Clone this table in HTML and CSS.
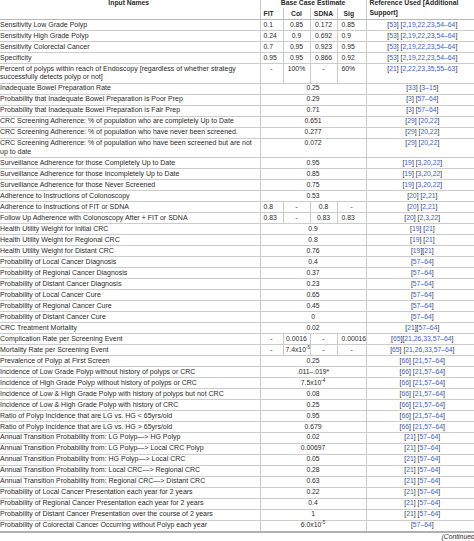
FILE: index.html
```html
<!DOCTYPE html>
<html>
<head>
<meta charset="utf-8">
<link rel="stylesheet" href="styles.css">
</head>
<body>
<div class="page">
<table class="tbl">
<colgroup>
<col class="w-name"><col class="w-fit"><col class="w-col"><col class="w-sdna"><col class="w-sig"><col class="w-ref">
</colgroup>
<thead>
<tr>
<th class="h-name" rowspan="2">Input Names</th>
<th class="h-base" colspan="4">Base Case Estimate</th>
<th class="h-ref" rowspan="2">Reference Used [Additional Support]</th>
</tr>
<tr class="h-sub">
<th class="fit">FIT</th><th>Col</th><th>SDNA</th><th class="sig">Sig</th>
</tr>
</thead>
<tbody>
<tr><td class="name">Sensitivity Low Grade Polyp</td><td class="fit">0.1</td><td class="c">0.85</td><td class="c">0.172</td><td class="sig">0.85</td><td class="ref">[<a>53</a>] [<a>2</a>,<a>19</a>,<a>22</a>,<a>23</a>,<a>54–64</a>]</td></tr>
<tr><td class="name">Sensitivity High Grade Polyp</td><td class="fit">0.24</td><td class="c">0.9</td><td class="c">0.692</td><td class="sig">0.9</td><td class="ref">[<a>53</a>] [<a>2</a>,<a>19</a>,<a>22</a>,<a>23</a>,<a>54–64</a>]</td></tr>
<tr><td class="name">Sensitivity Colorectal Cancer</td><td class="fit">0.7</td><td class="c">0.95</td><td class="c">0.923</td><td class="sig">0.95</td><td class="ref">[<a>53</a>] [<a>2</a>,<a>19</a>,<a>22</a>,<a>23</a>,<a>54–64</a>]</td></tr>
<tr><td class="name">Specificity</td><td class="fit">0.95</td><td class="c">0.95</td><td class="c">0.866</td><td class="sig">0.92</td><td class="ref">[<a>53</a>] [<a>2</a>,<a>19</a>,<a>22</a>,<a>23</a>,<a>54–64</a>]</td></tr>
<tr><td class="name">Percent of polyps within reach of Endoscopy [regardless of whether strategy successfully detects polyp or not]</td><td class="fitc">-</td><td class="c">100%</td><td class="c">-</td><td class="sig">60%</td><td class="ref">[<a>21</a>] [<a>2</a>,<a>22</a>,<a>23</a>,<a>35</a>,<a>55–63</a>]</td></tr>
<tr><td class="name">Inadequate Bowel Preparation Rate</td><td class="c" colspan="4">0.25</td><td class="ref">[<a>33</a>] [<a>3–15</a>]</td></tr>
<tr><td class="name">Probability that Inadequate Bowel Preparation is Poor Prep</td><td class="c" colspan="4">0.29</td><td class="ref">[<a>3</a>] [<a>57–64</a>]</td></tr>
<tr><td class="name">Probability that Inadequate Bowel Preparation is Fair Prep</td><td class="c" colspan="4">0.71</td><td class="ref">[<a>3</a>] [<a>57–64</a>]</td></tr>
<tr><td class="name">CRC Screening Adherence: % of population who are completely Up to Date</td><td class="c" colspan="4">0.651</td><td class="ref">[<a>29</a>] [<a>20</a>,<a>22</a>]</td></tr>
<tr><td class="name">CRC Screening Adherence: % of population who have never been screened.</td><td class="c" colspan="4">0.277</td><td class="ref">[<a>29</a>] [<a>20</a>,<a>22</a>]</td></tr>
<tr><td class="name">CRC Screening Adherence: % of population who have been screened but are not up to date</td><td class="c" colspan="4">0.072</td><td class="ref">[<a>29</a>] [<a>20</a>,<a>22</a>]</td></tr>
<tr><td class="name">Surveillance Adherence for those Completely Up to Date</td><td class="c" colspan="4">0.95</td><td class="ref">[<a>19</a>] [<a>3</a>,<a>20</a>,<a>22</a>]</td></tr>
<tr><td class="name">Surveillance Adherence for those Incompletely Up to Date</td><td class="c" colspan="4">0.85</td><td class="ref">[<a>19</a>] [<a>3</a>,<a>20</a>,<a>22</a>]</td></tr>
<tr><td class="name">Surveillance Adherence for those Never Screened</td><td class="c" colspan="4">0.75</td><td class="ref">[<a>19</a>] [<a>3</a>,<a>20</a>,<a>22</a>]</td></tr>
<tr><td class="name">Adherence to Instructions of Colonoscopy</td><td class="c" colspan="4">0.53</td><td class="ref">[<a>20</a>] [<a>2</a>,<a>21</a>]</td></tr>
<tr><td class="name">Adherence to Instructions of FIT or SDNA</td><td class="fit">0.8</td><td class="c">-</td><td class="c">0.8</td><td class="sigc">-</td><td class="ref">[<a>20</a>] [<a>2</a>,<a>21</a>]</td></tr>
<tr><td class="name">Follow Up Adherence with Colonoscopy After + FIT or SDNA</td><td class="fit">0.83</td><td class="c">-</td><td class="c">0.83</td><td class="sig">0.83</td><td class="ref">[<a>20</a>] [<a>2</a>,<a>3</a>,<a>22</a>]</td></tr>
<tr><td class="name">Health Utility Weight for Initial CRC</td><td class="c" colspan="4">0.9</td><td class="ref">[<a>19</a>] [<a>21</a>]</td></tr>
<tr><td class="name">Health Utility Weight for Regional CRC</td><td class="c" colspan="4">0.8</td><td class="ref">[<a>19</a>] [<a>21</a>]</td></tr>
<tr><td class="name">Health Utility Weight for Distant CRC</td><td class="c" colspan="4">0.76</td><td class="ref">[<a>19</a>][<a>21</a>]</td></tr>
<tr><td class="name">Probability of Local Cancer Diagnosis</td><td class="c" colspan="4">0.4</td><td class="ref">[<a>57–64</a>]</td></tr>
<tr><td class="name">Probability of Regional Cancer Diagnosis</td><td class="c" colspan="4">0.37</td><td class="ref">[<a>57–64</a>]</td></tr>
<tr><td class="name">Probability of Distant Cancer Diagnosis</td><td class="c" colspan="4">0.23</td><td class="ref">[<a>57–64</a>]</td></tr>
<tr><td class="name">Probability of Local Cancer Cure</td><td class="c" colspan="4">0.65</td><td class="ref">[<a>57–64</a>]</td></tr>
<tr><td class="name">Probability of Regional Cancer Cure</td><td class="c" colspan="4">0.45</td><td class="ref">[<a>57–64</a>]</td></tr>
<tr><td class="name">Probability of Distant Cancer Cure</td><td class="c" colspan="4">0</td><td class="ref">[<a>57–64</a>]</td></tr>
<tr><td class="name">CRC Treatment Mortality</td><td class="c" colspan="4">0.02</td><td class="ref">[<a>21</a>][<a>57–64</a>]</td></tr>
<tr><td class="name">Complication Rate per Screening Event</td><td class="fitc">-</td><td class="c">0.0016</td><td class="c">-</td><td class="sig">0.00016</td><td class="ref">[<a>65</a>][<a>21</a>,<a>26</a>,<a>33</a>,<a>57–64</a>]</td></tr>
<tr><td class="name">Mortality Rate per Screening Event</td><td class="fitc">-</td><td class="c">7.4x10<sup>-5</sup></td><td class="c">-</td><td class="sigc">-</td><td class="ref">[<a>65</a>] [<a>21</a>,<a>26</a>,<a>33</a>,<a>57–64</a>]</td></tr>
<tr><td class="name">Prevalence of Polyp at First Screen</td><td class="c" colspan="4">0.25</td><td class="ref">[<a>66</a>] [<a>21</a>,<a>57–64</a>]</td></tr>
<tr><td class="name">Incidence of Low Grade Polyp without history of polyps or CRC</td><td class="c" colspan="4">.011–.019*</td><td class="ref">[<a>66</a>] [<a>21</a>,<a>57–64</a>]</td></tr>
<tr><td class="name">Incidence of High Grade Polyp without history of polyps or CRC</td><td class="c" colspan="4">7.5x10<sup>-4</sup></td><td class="ref">[<a>66</a>] [<a>21</a>,<a>57–64</a>]</td></tr>
<tr><td class="name">Incidence of Low &amp; High Grade Polyp with history of polyps but not CRC</td><td class="c" colspan="4">0.08</td><td class="ref">[<a>66</a>] [<a>21</a>,<a>57–64</a>]</td></tr>
<tr><td class="name">Incidence of Low &amp; High Grade Polyp with history of CRC</td><td class="c" colspan="4">0.25</td><td class="ref">[<a>66</a>] [<a>21</a>,<a>57–64</a>]</td></tr>
<tr><td class="name">Ratio of Polyp Incidence that are LG vs. HG &lt; 65yrs/old</td><td class="c" colspan="4">0.95</td><td class="ref">[<a>66</a>] [<a>21</a>,<a>57–64</a>]</td></tr>
<tr><td class="name">Ratio of Polyp Incidence that are LG vs. HG &gt; 65yrs/old</td><td class="c" colspan="4">0.679</td><td class="ref">[<a>66</a>] [<a>21</a>,<a>57–64</a>]</td></tr>
<tr><td class="name">Annual Transition Probability from: LG Polyp—&gt; HG Polyp</td><td class="c" colspan="4">0.02</td><td class="ref">[<a>21</a>] [<a>57–64</a>]</td></tr>
<tr><td class="name">Annual Transition Probability from: LG Polyp—&gt; Local CRC Polyp</td><td class="c" colspan="4">0.00697</td><td class="ref">[<a>21</a>] [<a>57–64</a>]</td></tr>
<tr><td class="name">Annual Transition Probability from: HG Polyp—&gt; Local CRC</td><td class="c" colspan="4">0.05</td><td class="ref">[<a>21</a>] [<a>57–64</a>]</td></tr>
<tr><td class="name">Annual Transition Probability from: Local CRC—&gt; Regional CRC</td><td class="c" colspan="4">0.28</td><td class="ref">[<a>21</a>] [<a>57–64</a>]</td></tr>
<tr><td class="name">Annual Transition Probability from: Regional CRC—&gt; Distant CRC</td><td class="c" colspan="4">0.63</td><td class="ref">[<a>21</a>] [<a>57–64</a>]</td></tr>
<tr><td class="name">Probability of Local Cancer Presentation each year for 2 years</td><td class="c" colspan="4">0.22</td><td class="ref">[<a>21</a>] [<a>57–64</a>]</td></tr>
<tr><td class="name">Probability of Regional Cancer Presentation each year for 2 years</td><td class="c" colspan="4">0.4</td><td class="ref">[<a>21</a>] [<a>57–64</a>]</td></tr>
<tr><td class="name">Probability of Distant Cancer Presentation over the course of 2 years</td><td class="c" colspan="4">1</td><td class="ref">[<a>21</a>] [<a>57–64</a>]</td></tr>
<tr class="last"><td class="name">Probability of Colorectal Cancer Occurring without Polyp each year</td><td class="c" colspan="4">6.0x10<sup>-5</sup></td><td class="ref">[<a>57–64</a>]</td></tr>
</tbody>
</table>
<p class="cont">(Continued)</p>
</div>
</body>
</html>
```
FILE: styles.css
```css
html, body {
  margin: 0;
  padding: 0;
  background: #ffffff;
  overflow: hidden;
}
.page {
  width: 480px;
  margin-left: -2px;
  margin-top: -3px;
  font-family: "Liberation Sans", Arial, Helvetica, sans-serif;
  font-size: 6.8px;
  color: #2a2a2a;
}
.tbl {
  width: 480px;
  border-collapse: collapse;
  table-layout: fixed;
}
.w-name { width: 262px; }
.w-fit { width: 23px; }
.w-col { width: 27px; }
.w-sdna { width: 27px; }
.w-sig { width: 29px; }
.w-ref { width: 112px; }

th {
  font-weight: bold;
  line-height: 10px;
  padding: 0.5px 2px;
  vertical-align: top;
  text-align: center;
}
.h-name { text-align: center; border-bottom: 1px solid #b8b8b8; }
.h-base { border-left: 1px solid #c8c8c8; }
.h-ref {
  text-align: left;
  border-left: 1px solid #c8c8c8;
  border-bottom: 1px solid #b8b8b8;
  padding-left: 3px;
}
.h-sub th {
  border-left: 1px solid #c8c8c8;
  border-bottom: 1px solid #b8b8b8;
}
.h-sub th.fit { text-align: left; padding-left: 3px; }
.h-sub th.sig { text-align: left; padding-left: 6px; }

td {
  line-height: 8.7px;
  padding: 0.65px 2px;
  vertical-align: top;
  border-bottom: 1px solid #cccccc;
  border-left: 1px solid #cccccc;
  white-space: nowrap;
}
td.name {
  border-left: none;
  white-space: normal;
  padding-left: 2px;
  padding-right: 0;
  font-size: 7px;
}
td.c { text-align: center; }
td.fit { text-align: left; padding-left: 3px; }
td.fitc { text-align: center; }
td.sig { text-align: left; padding-left: 4px; }
td.sigc { text-align: center; }
td.ref { text-align: center; }
td a { color: #3b5fd0; text-decoration: none; }
td sup { font-size: 4.5px; line-height: 0; vertical-align: 3px; }
tr.last td { border-bottom: 2px solid #b0b0b0; }

.cont {
  margin: 0;
  text-align: right;
  font-style: italic;
  line-height: 8px;
  padding-right: 1px;
}
```
